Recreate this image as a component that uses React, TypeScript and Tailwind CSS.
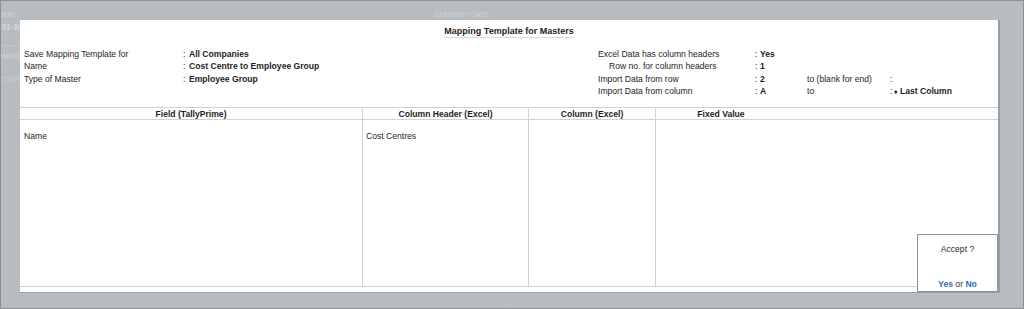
import React from 'react';

const Field: React.FC<{ label: string; value: string }> = ({ label, value }) => (
  <div className="flex">
    <span className="w-[159px]">{label}</span>
    <span className="w-[6px]">:</span>
    <span className="font-bold">{value}</span>
  </div>
);

export default function App() {
  return (
    <div className="relative w-[1024px] h-[309px] overflow-hidden border border-[#8c9094] bg-[#b7bcc0] font-['Liberation_Sans',Arial,sans-serif] text-[#1e1e1e]">
      {/* screen behind the dialog */}
      <div className="flex h-full">
        <div className="w-[19px] overflow-hidden whitespace-nowrap text-[#d3d6d9]">
          <div className="-ml-[13px] mt-[10px] text-[7px] leading-[8px]">PERIOD</div>
          <div className="mt-[3px] text-[9px] font-bold leading-[10px]">31-Mar-25</div>
          <div className="mt-[13px] border-t border-[#c3c7ca]" />
          <div className="-ml-[9px] mt-[7px] text-[7px] leading-[8px]">COMPANY</div>
          <div className="-ml-[3px] mt-[13px] text-[9px] leading-[10px] text-[#c9cdd0]">Enterprises</div>
        </div>
        <div className="flex flex-1">
          <div className="w-[491px] border-r border-[#babfc3]">
            <div className="ml-[415px] mt-[10px] text-[7px] leading-[8px] text-[#cfd3d6] whitespace-nowrap">CURRENT DATE</div>
          </div>
        </div>
      </div>

      {/* dialog */}
      <div className="absolute left-[19px] top-[19px] w-[980px] h-[273px] bg-white border-r-2 border-b border-[#9a9ea2] text-[8.6px]">
        <div className="pt-[5px] text-center leading-[12px]">
          <span className="inline-block border-b border-[#d9d9d9] text-[9px] font-bold">Mapping Template for Masters</span>
        </div>

        <div className="flex h-[60px] mt-[10px] border-b border-[#d2d2d2] leading-[12.4px] whitespace-nowrap">
          <div className="w-[578px] pl-[4px]">
            <Field label="Save Mapping Template for" value="All Companies" />
            <Field label="Name" value="Cost Centre to Employee Group" />
            <Field label="Type of Master" value="Employee Group" />
          </div>
          <div className="flex-1">
            <div className="flex">
              <span className="w-[157px]">Excel Data has column headers</span>
              <span className="w-[5px]">:</span>
              <span className="font-bold">Yes</span>
            </div>
            <div className="flex">
              <span className="w-[157px] pl-[11px]">Row no. for column headers</span>
              <span className="w-[5px]">:</span>
              <span className="font-bold">1</span>
            </div>
            <div className="flex">
              <span className="w-[157px]">Import Data from row</span>
              <span className="w-[5px]">:</span>
              <span className="w-[47px] font-bold">2</span>
              <span className="w-[83px]">to (blank for end)</span>
              <span className="w-[4px]">:</span>
            </div>
            <div className="flex">
              <span className="w-[157px]">Import Data from column</span>
              <span className="w-[5px]">:</span>
              <span className="w-[47px] font-bold">A</span>
              <span className="w-[83px]">to</span>
              <span className="w-[4px]">:</span>
              <span className="font-bold"><span className="text-[7px]">♦</span> Last Column</span>
            </div>
          </div>
        </div>

        <div className="flex h-[12px] border-b border-[#d2d2d2] font-bold leading-[12px] text-center">
          <div className="w-[343px] border-r border-[#d2d2d2]">Field (TallyPrime)</div>
          <div className="w-[166px] border-r border-[#d2d2d2]">Column Header (Excel)</div>
          <div className="w-[127px] border-r border-[#d2d2d2]">Column (Excel)</div>
          <div className="w-[130px]">Fixed Value</div>
          <div className="flex-1" />
        </div>

        <div className="flex h-[167px] border-b border-[#d2d2d2] leading-[12.4px]">
          <div className="w-[343px] border-r border-[#d2d2d2] pl-[4px] pt-[10px]">Name</div>
          <div className="w-[166px] border-r border-[#d2d2d2] pl-[3px] pt-[10px]">Cost Centres</div>
          <div className="w-[127px] border-r border-[#d2d2d2]" />
          <div className="flex-1" />
        </div>

        <div className="absolute right-0 bottom-0 w-[81px] h-[58px] flex flex-col items-center border border-[#8e9195] bg-white leading-[12px]">
          <div className="pt-[8px] text-[#2a2a2a]">Accept ?</div>
          <div className="mt-auto pb-[1px]">
            <span className="font-bold text-[#2f6cc0]">Yes</span>
            <span className="text-[#333]"> or </span>
            <span className="font-bold text-[#2f6cc0]">No</span>
          </div>
        </div>
      </div>
    </div>
  );
}
